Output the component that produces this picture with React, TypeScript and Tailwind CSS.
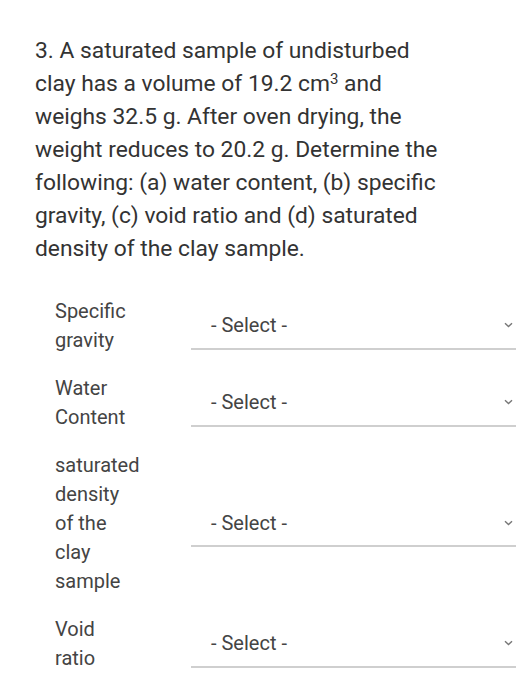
import React from 'react';

const questionLines: React.ReactNode[] = [
  '3. A saturated sample of undisturbed',
  <>
    clay has a volume of 19.2 cm<sup className="text-[15px]">3</sup> and
  </>,
  'weighs 32.5 g. After oven drying, the',
  'weight reduces to 20.2 g. Determine the',
  'following: (a) water content, (b) specific',
  'gravity, (c) void ratio and (d) saturated',
  'density of the clay sample.',
];

const fields = [
  { label: ['Specific', 'gravity'] },
  { label: ['Water', 'Content'] },
  { label: ['saturated', 'density', 'of the', 'clay', 'sample'] },
  { label: ['Void', 'ratio'] },
];

function Chevron() {
  return (
    <svg width="9" height="6" viewBox="0 0 9 6" className="shrink-0">
      <path d="M1 1.2 L4.5 4.6 L8 1.2" fill="none" stroke="#777" strokeWidth="1.4" />
    </svg>
  );
}

export default function App() {
  return (
    <div
      className="w-[516px] h-[700px] bg-white overflow-hidden"
      style={{ fontFamily: 'Roboto, "Noto Sans", sans-serif' }}
    >
      {/* Question text */}
      <div className="pt-[34px] pl-[35px] text-[22.8px] leading-[33px] text-[#333333]">
        {questionLines.map((line, i) => (
          <div key={i} className="whitespace-nowrap">
            {line}
          </div>
        ))}
      </div>

      {/* Answer rows */}
      <div className="mt-[32px] flex flex-col gap-[19px]">
        {fields.map((f, i) => (
          <div key={i} className="flex items-center">
            <div className="w-[191px] pl-[55px] shrink-0 text-[20px] leading-[29px] text-[#444444]">
              {f.label.map((l, j) => (
                <div key={j} className="whitespace-nowrap">
                  {l}
                </div>
              ))}
            </div>
            <div className="flex-1 h-[47px] flex items-center justify-between pl-[20px] pr-[3px] border-b-2 border-[#cfcfcf] text-[20px] text-[#444444]">
              <span>- Select -</span>
              <Chevron />
            </div>
          </div>
        ))}
      </div>
    </div>
  );
}
